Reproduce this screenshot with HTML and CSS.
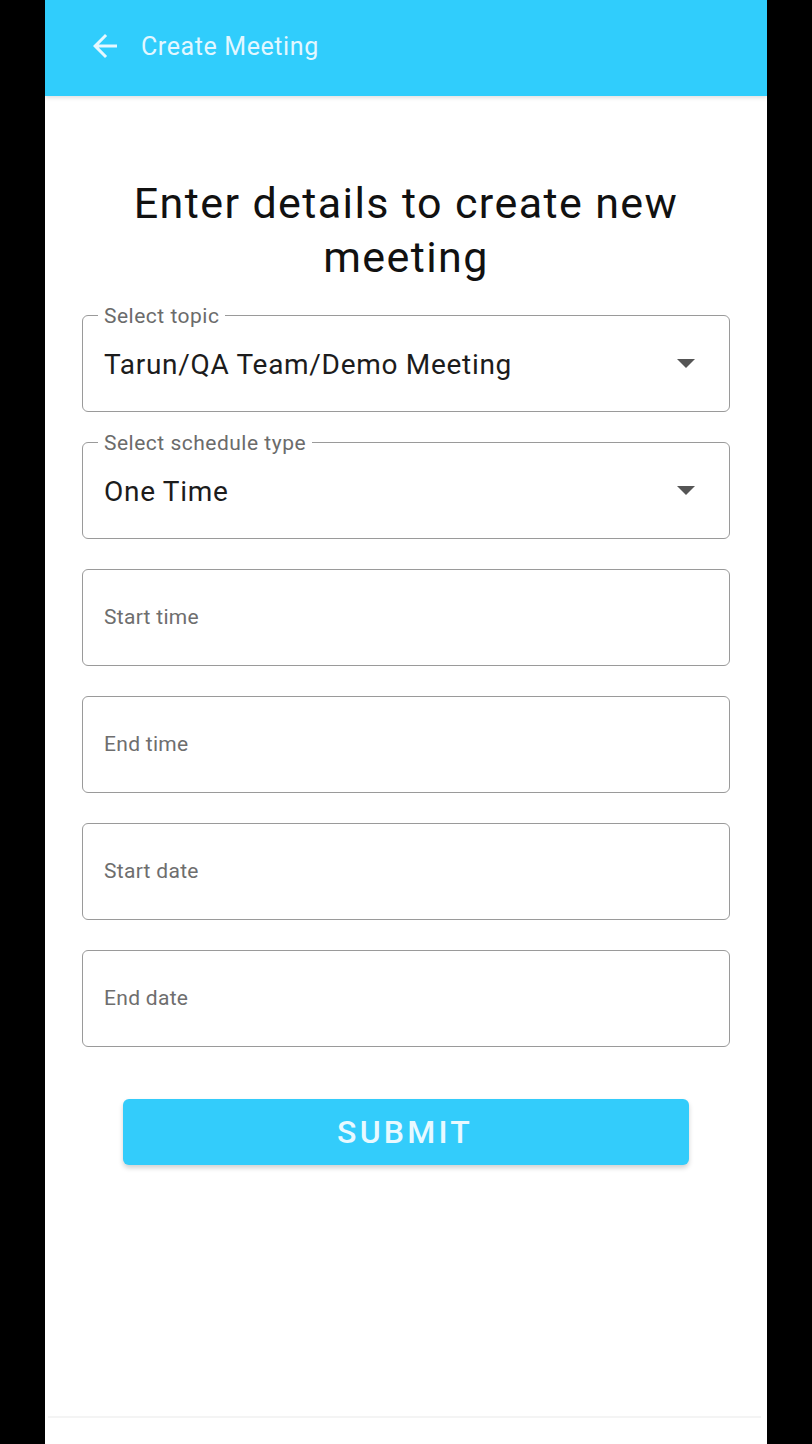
FILE: index.html
```html
<!DOCTYPE html>
<html>
<head>
<meta charset="utf-8">
<link rel="stylesheet" href="styles.css">
</head>
<body>
<div class="phone">
  <header class="appbar">
    <svg class="back" viewBox="0 0 24 24" width="36" height="36"><path d="M20 11H7.83l5.59-5.59L12 4l-8 8 8 8 1.41-1.41L7.83 13H20v-2z" fill="currentColor"/></svg>
    <span class="title">Create Meeting</span>
  </header>
  <main class="content">
    <h1 class="heading">Enter details to create new meeting</h1>
    <div class="fields">
      <div class="field select">
        <span class="label">Select topic</span>
        <span class="value">Tarun/QA Team/Demo Meeting</span>
        <span class="caret"></span>
      </div>
      <div class="field select">
        <span class="label">Select schedule type</span>
        <span class="value">One Time</span>
        <span class="caret"></span>
      </div>
      <div class="field"><span class="placeholder">Start time</span></div>
      <div class="field"><span class="placeholder">End time</span></div>
      <div class="field"><span class="placeholder">Start date</span></div>
      <div class="field"><span class="placeholder">End date</span></div>
    </div>
    <button class="submit">SUBMIT</button>
  </main>
  <div class="bottomline"></div>
</div>
</body>
</html>
```
FILE: styles.css
```css
* { box-sizing: border-box; }
html, body { margin: 0; padding: 0; }
body {
  background: #000;
  font-family: Roboto, "Noto Sans", sans-serif;
  width: 812px;
  height: 1444px;
  overflow: hidden;
}
.phone {
  margin-left: 45px;
  width: 722px;
  height: 1444px;
  background: #fff;
  display: flex;
  flex-direction: column;
  position: relative;
}
.appbar {
  height: 96px;
  background: #30cdfc;
  display: flex;
  align-items: center;
  padding-left: 42px;
  color: #e6f8ff;
  box-shadow: 0 2px 4px rgba(0,0,0,0.12);
  flex-shrink: 0;
}
.back { margin-top: -4px; }
.title {
  font-size: 25px;
  letter-spacing: 0.6px;
  margin-left: 18px;
  margin-top: -4px;
  color: #e3f7ff;
}
.content {
  flex: 1;
  display: flex;
  flex-direction: column;
  align-items: center;
}
.heading {
  margin: 80px 0 0;
  font-weight: 400;
  font-size: 43px;
  letter-spacing: 1.4px;
  line-height: 54px;
  text-align: center;
  color: #111;
  width: 640px;
}
.fields {
  margin-top: 31px;
  width: 648px;
  display: flex;
  flex-direction: column;
  gap: 30px;
}
.field {
  position: relative;
  height: 97px;
  border: 1.5px solid #9a9a9a;
  border-radius: 6px;
  display: flex;
  align-items: center;
  padding-left: 21px;
}
.label {
  position: absolute;
  top: -11px;
  left: 15px;
  padding: 0 6px;
  background: #fff;
  font-size: 21px;
  letter-spacing: 0.5px;
  color: #6b6b6b;
  line-height: 22px;
}
.value {
  font-size: 28px;
  letter-spacing: 0.7px;
  color: #1c1c1c;
  margin-top: 2px;
}
.placeholder {
  font-size: 21px;
  letter-spacing: 0.3px;
  color: #6e6e6e;
  margin-top: -1px;
}
.caret {
  position: absolute;
  right: 34px;
  top: 43px;
  width: 0; height: 0;
  border-left: 9px solid transparent;
  border-right: 9px solid transparent;
  border-top: 9px solid #555;
}
.submit {
  margin-top: 52px;
  width: 566px;
  height: 66px;
  border: none;
  border-radius: 6px;
  background: #33ccfb;
  color: #e8f9ff;
  font-family: Roboto, sans-serif;
  font-size: 32px;
  font-weight: 500;
  letter-spacing: 3.2px;
  padding-left: 4px;
  box-shadow: 0 3px 5px rgba(0,0,0,0.18);
}
.bottomline {
  position: absolute;
  left: 3px; right: 6px;
  bottom: 26px;
  height: 2px;
  background: #f4f4f4;
}
```
